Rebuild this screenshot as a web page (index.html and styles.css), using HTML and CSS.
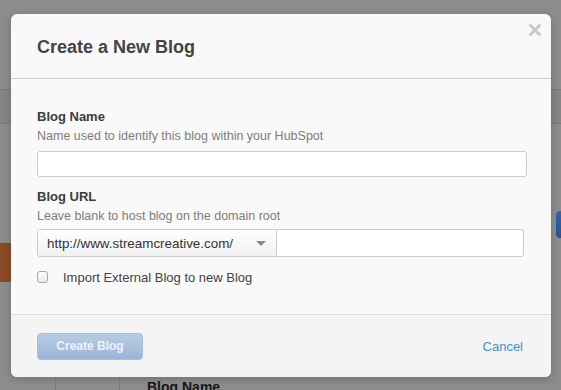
FILE: index.html
```html
<!DOCTYPE html>
<html lang="en">
<head>
  <meta charset="UTF-8" />
  <meta name="viewport" content="width=device-width, initial-scale=1.0"/>
  <title>Create a New Blog</title>
  <link rel="stylesheet" href="styles.css">
</head>

<body>
  <!-- page behind the dimmed backdrop -->
  <div class="page">
    <div class="page-header"></div>
    <div class="page-nav"></div>
    <div class="page-main">
      <div class="side-tab"></div>
      <div class="new-button"></div>
    </div>
    <div class="list-head">
      <div class="list-cell cell-check"></div>
      <div class="list-cell cell-icon"></div>
      <div class="list-cell cell-name">Blog Name</div>
    </div>
  </div>

  <div class="modal">
    <div class="modal-header">
      <h3>Create a New Blog</h3>
      <a class="modal-close" href="#">
        <svg width="12" height="12" viewBox="0 0 12 12">
          <path d="M1.5 1.5 L10.5 10.5 M10.5 1.5 L1.5 10.5" stroke="#c9c9c9" stroke-width="3" stroke-linecap="square"/>
        </svg>
      </a>
    </div>

    <div class="modal-body">
      <label class="field-label" for="blogName">Blog Name</label>
      <p class="field-help">Name used to identify this blog within your HubSpot</p>
      <input type="text" id="blogName" class="text-input" />

      <label class="field-label url-label" for="blogUrl">Blog URL</label>
      <p class="field-help">Leave blank to host blog on the domain root</p>
      <div class="url-row">
        <div class="domain-select">
          <span>http://www.streamcreative.com/</span>
          <span class="caret"></span>
        </div>
        <input type="text" id="blogUrl" class="text-input url-input" />
      </div>

      <div class="check-row">
        <span class="checkbox"></span>
        <span class="check-label">Import External Blog to new Blog</span>
      </div>
    </div>

    <div class="modal-footer">
      <button class="create-button" disabled>Create Blog</button>
      <a class="cancel-link" href="#">Cancel</a>
    </div>
  </div>
</body>
</html>
```

FILE: styles.css
```css
body {
  margin: 0;
  height: 390px;
  overflow: hidden;
  background-color: #8c8c8c;
  font-family: "Liberation Sans", Arial, sans-serif;
}

/* background page (colours already dimmed by the backdrop) */
.page-header {
  height: 89px;
  border-bottom: 1px solid #7c7c7c;
}

.page-nav {
  height: 33px;
  background-color: #858585;
  border-bottom: 1px solid #7a7a7a;
}

.page-main {
  display: flex;
  justify-content: space-between;
  align-items: flex-start;
  padding-top: 87px;
  height: 72px;
}

.side-tab {
  margin-top: 32px;
  width: 40px;
  height: 39px;
  background-color: #8b4a25;
}

.new-button {
  width: 60px;
  height: 27px;
  margin-right: -55px;
  border-radius: 4px;
  background: linear-gradient(#3566a6, #24528f);
}

.list-head {
  display: flex;
  margin-top: 94px;
  height: 30px;
}

.list-cell {
  border-right: 1px solid #7a7a7a;
}

.cell-check {
  width: 55px;
}

.cell-icon {
  width: 63px;
}

.cell-name {
  border-right: none;
  padding: 2px 0 0 27px;
  font-size: 14px;
  font-weight: bold;
  color: #161616;
}

/* modal */
.modal {
  position: absolute;
  left: 11px;
  top: 14px;
  width: 540px;
  background-color: #f9f9f9;
  border-radius: 6px;
  overflow: hidden;
  box-shadow: 0 2px 8px rgba(0, 0, 0, 0.2);
}

.modal-header {
  display: flex;
  justify-content: space-between;
  align-items: flex-start;
  height: 64px;
  padding: 0 10px 0 26px;
  border-bottom: 1px solid #cfcfcf;
}

.modal-header h3 {
  margin: 20px 0 0;
  font-size: 18px;
  line-height: 26px;
  font-weight: bold;
  color: #444444;
}

.modal-close {
  margin-top: 10px;
  line-height: 0;
}

.modal-body {
  padding: 30px 24px 29px 26px;
  border-bottom: 1px solid #dcdcdc;
}

.field-label {
  display: block;
  font-size: 13px;
  line-height: 16px;
  font-weight: bold;
  color: #3d3d3d;
}

.url-label {
  margin-top: 12px;
}

.field-help {
  margin: 4px 0 0;
  font-size: 12.5px;
  line-height: 15px;
  color: #7d7d7d;
}

.text-input {
  display: block;
  box-sizing: border-box;
  width: 490px;
  height: 26px;
  margin: 7px 0 0;
  padding: 0 8px;
  border: 1px solid #cccccc;
  border-radius: 3px;
  background-color: #ffffff;
  outline: none;
}

.url-row {
  display: flex;
  margin-top: 5px;
}

.domain-select {
  box-sizing: border-box;
  display: flex;
  justify-content: space-between;
  align-items: center;
  width: 240px;
  height: 28px;
  padding: 0 9px 0 9px;
  border: 1px solid #cccccc;
  border-radius: 3px 0 0 3px;
  background: linear-gradient(#ffffff, #f1f1f1);
  font-size: 13.4px;
  color: #333333;
}

.caret {
  width: 0;
  height: 0;
  border-left: 5px solid transparent;
  border-right: 5px solid transparent;
  border-top: 5px solid #8a8a8a;
  margin-right: 1px;
}

.url-input {
  width: 247px;
  height: 28px;
  margin: 0;
  border-left: none;
  border-radius: 0 3px 3px 0;
}

.check-row {
  display: flex;
  align-items: center;
  margin-top: 12px;
  height: 16px;
}

.checkbox {
  box-sizing: border-box;
  width: 11px;
  height: 12px;
  border: 1px solid #a9a9a9;
  border-radius: 3px;
  background: linear-gradient(#ffffff, #e9e9e9);
}

.check-label {
  margin-left: 15px;
  font-size: 13px;
  color: #444444;
}

.modal-footer {
  display: flex;
  justify-content: space-between;
  align-items: center;
  height: 62px;
  padding: 0 28px 0 26px;
  background-color: #f4f4f4;
}

.create-button {
  width: 106px;
  height: 27px;
  padding: 0;
  border: 1px solid #a6bddb;
  border-radius: 4px;
  background: linear-gradient(#b6cde2, #9db4da);
  font-family: "Liberation Sans", Arial, sans-serif;
  font-size: 12px;
  font-weight: bold;
  color: #eef3f9;
}

.cancel-link {
  font-size: 13px;
  color: #3d8fe0;
  text-decoration: none;
}
```
